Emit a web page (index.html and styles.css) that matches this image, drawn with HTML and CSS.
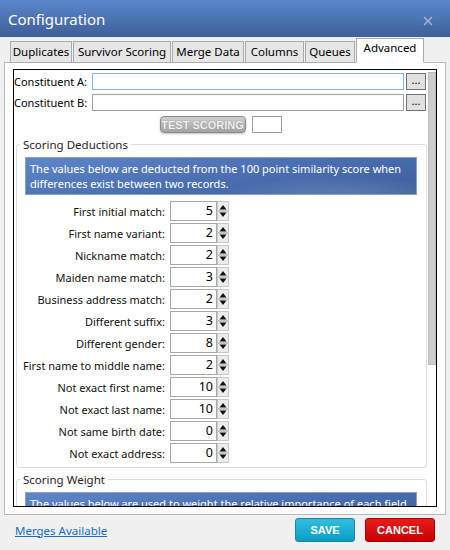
FILE: index.html
```html
<!DOCTYPE html>
<html lang="en">
<head>
  <meta charset="UTF-8" />
  <title>Configuration</title>
  <link rel="stylesheet" href="styles.css">
</head>
<body>
  <div class="titlebar">
    <span class="title">Configuration</span>
    <svg class="close" width="10" height="10" viewBox="0 0 10 10"><path d="M1 1L9 9M9 1L1 9" stroke="#a8bbd8" stroke-width="1.3"/></svg>
  </div>

  <!-- Tabs -->
  <div class="tabs">
    <div class="tab w-dup">Duplicates</div>
    <div class="tab w-surv">Survivor Scoring</div>
    <div class="tab w-merge">Merge Data</div>
    <div class="tab w-col">Columns</div>
    <div class="tab w-queue">Queues</div>
    <div class="tab active w-adv">Advanced</div>
  </div>

  <div class="panel">
    <div class="scrollbox">
      <div class="content">
        <div class="const-row">
          <label>Constituent A:</label>
          <input type="text" class="const-input focused">
          <button class="dots">...</button>
        </div>
        <div class="const-row">
          <label>Constituent B:</label>
          <input type="text" class="const-input">
          <button class="dots">...</button>
        </div>
        <div class="test-row">
          <button class="test-btn">TEST SCORING</button>
          <div class="score-box"></div>
        </div>

        <fieldset class="group">
          <legend>Scoring Deductions</legend>
          <div class="banner">The values below are deducted from the 100 point similarity score when differences exist between two records.</div>
          <div class="fields" id="deductions"></div>
        </fieldset>

        <fieldset class="group">
          <legend>Scoring Weight</legend>
          <div class="banner">The values below are used to weight the relative importance of each field when scoring.</div>
        </fieldset>
      </div>
      <div class="scrollbar"><div class="thumb"></div></div>
    </div>
  </div>

  <div class="footer">
    <a href="#" class="link">Merges Available</a>
    <div class="actions">
      <button class="btn save">SAVE</button>
      <button class="btn cancel">CANCEL</button>
    </div>
  </div>

  <script>
    const deductions = [
      ['First initial match', 5],
      ['First name variant', 2],
      ['Nickname match', 2],
      ['Maiden name match', 3],
      ['Business address match', 2],
      ['Different suffix', 3],
      ['Different gender', 8],
      ['First name to middle name', 2],
      ['Not exact first name', 10],
      ['Not exact last name', 10],
      ['Not same birth date', 0],
      ['Not exact address', 0]
    ];

    const spinner = `
      <svg class="spin" width="12" height="20" viewBox="0 0 12 20">
        <rect x="0.5" y="0.5" width="11" height="19" fill="#ececec" stroke="#c8c8c8"/>
        <path d="M2.5 8.5L6 4L9.5 8.5Z" fill="#111"/>
        <path d="M1 10H11" stroke="#a0a0a0"/>
        <path d="M2.5 11.5L9.5 11.5L6 16Z" fill="#111"/>
      </svg>`;

    const grid = document.getElementById('deductions');
    deductions.forEach(([name, value]) => {
      grid.innerHTML += `
        <div class="field-label">${name}:</div>
        <div class="num">${value}</div>
        ${spinner}
      `;
    });
  </script>
</body>
</html>
```

FILE: styles.css
```css
* {
  box-sizing: border-box;
}
body {
  margin: 0;
  width: 450px;
  height: 550px;
  overflow: hidden;
  background: #f0f0f0;
  font-family: "Noto Sans", "Open Sans", sans-serif;
  font-size: 11px;
  color: #000;
}
.titlebar {
  height: 37px;
  display: flex;
  align-items: center;
  justify-content: space-between;
  padding: 0 17px 0 8px;
  background: linear-gradient(#5a87cd, #3f5f97);
}
.title {
  color: #fff;
  font-size: 15px;
  margin-top: 1px;
}
.close {
  margin-top: 4px;
}
.tabs {
  display: flex;
  align-items: flex-end;
  height: 26px;
  padding-left: 10px;
  position: relative;
  z-index: 1;
  margin-bottom: -1px;
}
.tab {
  height: 22px;
  border: 1px solid #acacac;
  background: #e6e6e6;
  text-align: center;
  line-height: 19px;
  margin-right: 1px;
  white-space: nowrap;
  font-size: 11.5px;
}
.tab.active {
  height: 25px;
  background: #fff;
  border-bottom-color: #fff;
  line-height: 18px;
  margin-right: 0;
}
.w-dup { width: 62px; }
.w-surv { width: 98px; }
.w-merge { width: 72px; }
.w-col { width: 59px; }
.w-queue { width: 50px; }
.w-adv { width: 68px; }

.panel {
  margin: 0 4px;
  height: 453px;
  border: 1px solid #b9b9b9;
  background: #fff;
  padding: 6px 8px 0 8px;
}
.scrollbox {
  height: 438px;
  border: 1px solid #000;
  display: flex;
  overflow: hidden;
}
.content {
  flex: 1;
  padding: 3px 0 0 0;
}
.scrollbar {
  width: 8px;
  background: #fff;
}
.thumb {
  height: 293px;
  margin-top: 2px;
  background: #cdcdcd;
  border: 1px solid #bdbdbd;
}

.const-row {
  display: flex;
  align-items: center;
  height: 17px;
  margin-bottom: 4px;
}
.const-row label {
  width: 78px;
  white-space: nowrap;
}
.const-input {
  width: 312px;
  height: 17px;
  border: 1px solid #a0a0a0;
  margin: 0;
  padding: 0;
}
.const-input.focused {
  border-color: #7eb4ea;
}
.dots {
  width: 20px;
  height: 17px;
  margin-left: 2px;
  padding: 0 0 4px;
  border: 1px solid #707070;
  background: #e1e1e1;
  font-family: inherit;
  font-size: 11px;
  line-height: 8px;
}
.test-row {
  display: flex;
  justify-content: center;
  gap: 6px;
  margin-top: 5px;
  padding-right: 1px;
}
.test-btn {
  width: 86px;
  height: 17px;
  padding: 0;
  border: 1px solid #8c8c8c;
  border-radius: 4px;
  background: linear-gradient(#cfcfcf, #a3a3a3);
  box-shadow: 0 1px 2px rgba(0,0,0,0.25);
  color: #f2f2f2;
  font-family: "Liberation Sans", Arial, sans-serif;
  font-weight: bold;
  font-size: 11px;
  text-shadow: 0 0 1px #777;
}
.score-box {
  width: 30px;
  height: 17px;
  border: 1px solid #a0a0a0;
}

.group {
  margin: 4px 1px 0 2px;
  padding: 0 9px 4px 8px;
  border: 1px solid #d5dfe5;
  border-radius: 3px;
}
.group legend {
  padding: 0 3px;
  margin-left: -5px;
  color: #1e1e1e;
  font-size: 11.5px;
}
.banner {
  margin-top: 5px;
  padding: 3px 4px 3px 4px;
  line-height: 15px;
  color: #fff;
  border: 1px solid #8aa0c4;
  background:
    radial-gradient(ellipse 180px 30px at 80% 110%, rgba(255,255,255,0.18), transparent 70%),
    linear-gradient(170deg, #5f86ca 0%, #4a6fb2 50%, #3f5f9d 100%);
}
.fields {
  display: grid;
  grid-template-columns: 153px 47px 12px;
  row-gap: 2px;
  margin: 6px 0 0 -8px;
}
.field-label {
  display: flex;
  justify-content: flex-end;
  align-items: center;
  white-space: nowrap;
  padding-right: 5px;
  color: #111;
}
.num {
  height: 20px;
  border: 1px solid #a8a8a8;
  text-align: right;
  padding-right: 3px;
  line-height: 17px;
  font-size: 12.5px;
}
.spin {
  display: block;
}

.footer {
  display: flex;
  align-items: center;
  justify-content: space-between;
  padding: 3px 15px 0 15px;
}
.link {
  color: #1a6cc6;
  font-size: 11.5px;
}
.actions {
  display: flex;
  gap: 10px;
}
.btn {
  height: 24px;
  border-radius: 3px;
  color: #fff;
  font-family: "Liberation Sans", Arial, sans-serif;
  font-weight: bold;
  font-size: 11px;
  padding: 0;
}
.save {
  width: 60px;
  border: 1px solid #1b86a6;
  background: linear-gradient(#35bde0, #079ec4);
}
.cancel {
  width: 70px;
  border: 1px solid #a80000;
  background: linear-gradient(#ea1c1c, #c90000);
}
```
